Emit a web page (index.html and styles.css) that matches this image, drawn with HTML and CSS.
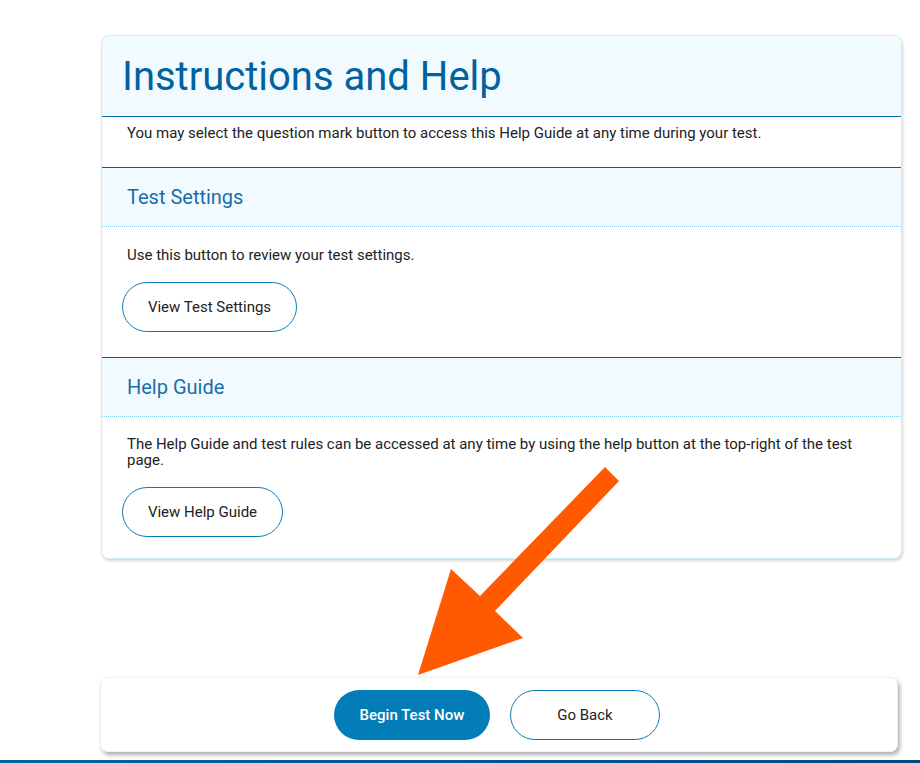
FILE: index.html
```html
<!DOCTYPE html>
<html lang="en">
<head>
<meta charset="utf-8">
<title>Instructions and Help</title>
<link rel="stylesheet" href="styles.css">
</head>
<body>
<div class="page">
  <main class="card">
    <header class="card-head">
      <h1 class="title">Instructions and Help</h1>
    </header>
    <div class="intro">
      <p>You may select the question mark button to access this Help Guide at any time during your test.</p>
    </div>
    <section class="section">
      <h2 class="section-title">Test Settings</h2>
      <div class="section-body">
        <p>Use this button to review your test settings.</p>
        <button class="btn btn-outline btn-settings">View Test Settings</button>
      </div>
    </section>
    <section class="section section-last">
      <h2 class="section-title">Help Guide</h2>
      <div class="section-body">
        <p>The Help Guide and test rules can be accessed at any time by using the help button at the top-right of the test page.</p>
        <button class="btn btn-outline btn-help">View Help Guide</button>
      </div>
    </section>
  </main>
  <footer class="actions">
    <button class="btn btn-primary">Begin Test Now</button>
    <button class="btn btn-outline btn-back">Go Back</button>
  </footer>
  <div class="strip"></div>
</div>
<svg class="arrow" width="920" height="763" viewBox="0 0 920 763" aria-hidden="true">
  <polygon points="418,675 451,569 480,596 605,467 619,481 495,611 523,638" fill="#ff5a00"/>
</svg>
</body>
</html>
```
FILE: styles.css
```css
html, body {
  margin: 0;
  padding: 0;
  background: #ffffff;
}
body {
  font-family: Roboto, "Liberation Sans", Arial, sans-serif;
  color: #222222;
  width: 920px;
  height: 763px;
  overflow: hidden;
  position: relative;
}
.page {
  display: flex;
  flex-direction: column;
}
.page > * {
  flex: none;
}
.card {
  margin: 35px 0 0 101px;
  width: 799px;
  border: 1px solid #d3ecf8;
  border-radius: 8px;
  box-shadow: 1px 2px 3px rgba(0, 0, 0, 0.16);
  overflow: hidden;
  background: #ffffff;
}
.card-head {
  background: #f1fafe;
  height: 80px;
  border-bottom: 1px solid #0a74b0;
  display: flex;
  align-items: center;
  padding-left: 20px;
}
.title {
  margin: 0;
  font-size: 40px;
  font-weight: 400;
  color: #02629e;
  line-height: 1;
  padding-top: 2px;
}
.intro {
  border-bottom: 1px solid #045c91;
  height: 51px;
  box-sizing: border-box;
  padding: 8px 25px 0;
}
.intro p {
  margin: 0;
  font-size: 15px;
  line-height: 17px;
}
.section-title {
  margin: 0;
  background: #f1fafe;
  height: 58px;
  display: flex;
  align-items: center;
  padding-left: 25px;
  font-size: 20px;
  font-weight: 400;
  color: #1a6ea8;
  border-bottom: 1px dotted #86cdea;
}
.section {
  border-bottom: 1px solid #045c91;
}
.section-last {
  border-bottom: none;
}
.section-body {
  padding: 20px 25px 25px;
  display: flex;
  flex-direction: column;
  align-items: flex-start;
}
.section-body p {
  margin: 0 0 19px;
  font-size: 15px;
  line-height: 16px;
}
.section-last .section-body {
  padding-top: 19px;
  padding-bottom: 21px;
}
.btn {
  font-family: Roboto, "Liberation Sans", Arial, sans-serif;
  font-size: 15px;
  height: 50px;
  border-radius: 25px;
  padding: 0 20px;
  cursor: pointer;
  color: #222222;
  background: #ffffff;
}
.btn-outline {
  border: 1px solid #0b7db6;
}
.btn-settings {
  width: 175px;
  margin-left: -5px;
}
.btn-help {
  width: 161px;
  margin-left: -5px;
}
.actions {
  margin: 118px 0 0 100px;
  width: 798px;
  height: 75px;
  box-sizing: border-box;
  border: 1px solid #f0f0f0;
  border-radius: 8px;
  box-shadow: 2px 3px 4px rgba(0, 0, 0, 0.32);
  display: flex;
  justify-content: center;
  align-items: center;
  gap: 20px;
  padding-right: 4px;
}
.btn-primary {
  border: none;
  background: #027db8;
  color: #ffffff;
  font-size: 15px;
  font-weight: 500;
  width: 156px;
}
.btn-back {
  width: 150px;
}
.strip {
  margin-top: 8px;
  height: 5px;
  background: linear-gradient(90deg, #0062a0, #00588f 50%, #004a7c);
}
.arrow {
  position: absolute;
  left: 0;
  top: 0;
  pointer-events: none;
}
```
